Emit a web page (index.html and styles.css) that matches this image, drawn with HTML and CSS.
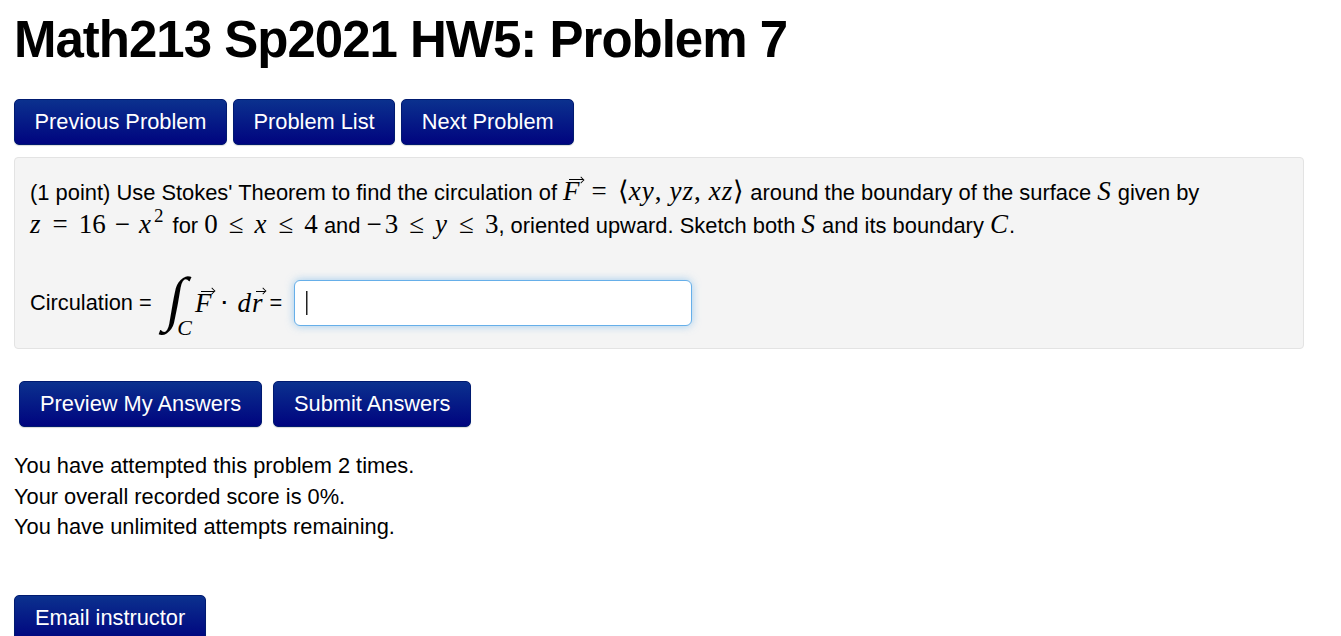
FILE: index.html
```html
<!DOCTYPE html>
<html lang="en">
<head>
<meta charset="utf-8">
<title>Math213 Sp2021 HW5: Problem 7</title>
<link rel="stylesheet" href="styles.css">
</head>
<body>
<div class="page">
  <h1 class="title">Math213 Sp2021 HW5: Problem 7</h1>
  <div class="nav">
    <button class="btn">Previous Problem</button>
    <button class="btn">Problem List</button>
    <button class="btn">Next Problem</button>
  </div>
  <div class="problem">
    <p class="statement">(1 point) Use Stokes' Theorem to find the circulation of <span class="m"><span class="vec"><i>F</i></span><span class="rel">=</span><span class="up">⟨</span><i>xy</i>,<span class="sp"></span><i>yz</i>,<span class="sp"></span><i>xz</i><span class="up">⟩</span></span> around the boundary of the surface <span class="m"><i>S</i></span> given by<br><span class="m"><i>z</i><span class="rel">=</span>16<span class="bin">−</span><i>x</i><sup>2</sup></span> for <span class="m">0<span class="rel">≤</span><i>x</i><span class="rel">≤</span>4</span> and <span class="m"><span class="neg">−</span>3<span class="rel">≤</span><i>y</i><span class="rel">≤</span>3</span>, oriented upward. Sketch both <span class="m"><i>S</i></span> and its boundary <span class="m"><i>C</i></span>.</p>
    <div class="answer-row">
      <span class="label">Circulation =</span>
      <span class="m integral"><span class="intsign">∫</span><sub class="intsub"><i>C</i></sub></span>
      <span class="m"><span class="vec"><i>F</i></span><span class="dot">⋅</span><i>d</i><span class="vec"><i>r</i></span></span>
      <span class="label eq">=</span>
      <input class="answer" type="text" autofocus>
    </div>
  </div>
  <div class="actions">
    <button class="btn">Preview My Answers</button>
    <button class="btn">Submit Answers</button>
  </div>
  <div class="status">
    <div>You have attempted this problem 2 times.</div>
    <div>Your overall recorded score is 0%.</div>
    <div>You have unlimited attempts remaining.</div>
  </div>
  <div class="email">
    <button class="btn">Email instructor</button>
  </div>
</div>
</body>
</html>
```

FILE: styles.css
```css
html, body {
  margin: 0;
  padding: 0;
  background: #ffffff;
}

body {
  font-family: "Liberation Sans", Arial, sans-serif;
  color: #000;
  overflow: hidden;
}

.page {
  width: 1290px;
  padding: 0 14px;
}

.title {
  margin: 10px 0 0;
  font-size: 51px;
  line-height: 60px;
  letter-spacing: -1px;
  font-weight: bold;
}

.nav {
  display: flex;
  gap: 6px;
  margin-top: 29px;
}

.btn {
  font-family: "Liberation Sans", Arial, sans-serif;
  font-size: 21.8px;
  color: #fff;
  height: 46px;
  padding: 0 19.5px;
  border: 1px solid #001a70;
  border-radius: 5px;
  background: linear-gradient(to bottom, #0b318e 0%, #00047f 100%);
  box-shadow: 0 1px 1px rgba(0, 0, 0, 0.15);
  cursor: pointer;
}

.actions .btn,
.email .btn {
  padding: 0 20px;
}

.problem {
  margin-top: 12px;
  background: #f4f4f4;
  border: 1px solid #e3e3e3;
  border-radius: 4px;
  padding: 18px 15px 10px;
  height: 162px;
}

.statement {
  margin: 0;
  font-size: 21.9px;
  line-height: 33px;
}

.m {
  font-family: "Liberation Serif", "Times New Roman", serif;
  font-size: 27px;
  line-height: 1;
  white-space: nowrap;
}

.m i {
  font-style: italic;
  letter-spacing: 1px;
}

.m sup {
  font-size: 19px;
  vertical-align: 11px;
  line-height: 0;
  margin-left: 2px;
  margin-right: 3px;
}

.rel {
  padding: 0 11px;
}

.bin {
  padding: 0 9px;
}

.neg {
  padding-right: 3px;
}

.sp {
  display: inline-block;
  width: 8px;
}

.dot {
  padding: 0 8px;
}

.vec {
  position: relative;
  display: inline-block;
}

.vec::before {
  content: "";
  position: absolute;
  left: 35%;
  right: -2px;
  top: 1px;
  height: 1.2px;
  background: #000;
}

.vec::after {
  content: "";
  position: absolute;
  right: -3px;
  top: -1.5px;
  width: 5px;
  height: 5px;
  border-top: 1.5px solid #000;
  border-right: 1.5px solid #000;
  transform: rotate(45deg) scale(0.8);
}

.answer-row {
  display: flex;
  align-items: center;
  margin-top: 28px;
  height: 66px;
}

.label {
  font-size: 21.8px;
  margin-right: 8px;
}

.label.eq {
  margin-left: 6px;
  margin-right: 12px;
}

.integral {
  display: inline-flex;
  align-items: flex-end;
  margin-left: 8px;
  margin-right: 2px;
  position: relative;
  top: -4px;
}

.intsign {
  font-family: "Liberation Serif", "Times New Roman", serif;
  font-size: 60px;
  line-height: 60px;
  font-style: italic;
  display: inline-block;
  transform: skewX(-10deg);
}

.intsub {
  font-size: 22px;
  line-height: 22px;
  margin-left: -7px;
  margin-bottom: -10px;
}

.answer {
  width: 398px;
  height: 46px;
  box-sizing: border-box;
  border: 1px solid #66afe9;
  border-radius: 6px;
  box-shadow: 0 0 8px rgba(102, 175, 233, 0.6);
  outline: none;
  padding: 4px 10px;
  font-size: 20px;
  background: #fff linear-gradient(#222, #222) no-repeat 11px center / 1.5px 24px;
}

.actions {
  display: flex;
  gap: 11px;
  margin-top: 32px;
  padding-left: 5px;
}

.status {
  margin-top: 24px;
  font-size: 21.8px;
  line-height: 30.5px;
}

.email {
  margin-top: 52px;
}
```
